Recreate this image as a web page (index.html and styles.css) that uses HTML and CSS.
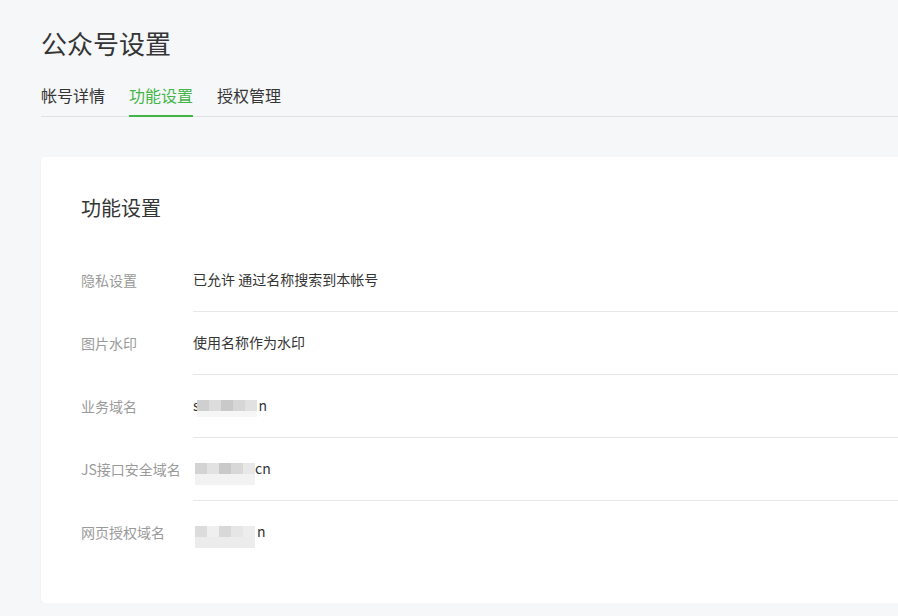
FILE: index.html
```html
<!DOCTYPE html>
<html lang="zh">
<head>
<meta charset="utf-8">
<title>公众号设置</title>
<link rel="stylesheet" href="styles.css">
</head>
<body>
<div class="page">
  <h1 class="page-title">公众号设置</h1>
  <nav class="tabs">
    <a class="tab">帐号详情</a>
    <a class="tab active">功能设置</a>
    <a class="tab">授权管理</a>
  </nav>
  <section class="card">
    <h2 class="card-title">功能设置</h2>
    <div class="rows">
      <div class="row">
        <div class="label">隐私设置</div>
        <div class="value">已允许 通过名称搜索到本帐号</div>
      </div>
      <div class="row">
        <div class="label">图片水印</div>
        <div class="value">使用名称作为水印</div>
      </div>
      <div class="row">
        <div class="label">业务域名</div>
        <div class="value">s<span class="mosaic m1"><i></i><i></i><i></i><i></i><i></i><i></i><i></i><i></i><i></i><i></i></span>n</div>
      </div>
      <div class="row">
        <div class="label">JS接口安全域名</div>
        <div class="value"><span class="mosaic m2"><i></i><i></i><i></i><i></i><i></i><i></i><i></i><i></i><i></i><i></i></span>cn</div>
      </div>
      <div class="row last">
        <div class="label">网页授权域名</div>
        <div class="value"><span class="mosaic m3"><i></i><i></i><i></i><i></i><i></i><i></i><i></i><i></i><i></i><i></i></span>n</div>
      </div>
    </div>
  </section>
</div>
</body>
</html>
```

FILE: styles.css
```css
html, body {
  margin: 0;
  padding: 0;
  background: #f6f7f9;
  overflow: hidden;
}
body {
  font-family: "Microsoft YaHei", "Noto Sans CJK SC", "Liberation Sans", sans-serif;
  color: #353535;
}
.page {
  padding: 24px 0 0 41px;
}
.page-title {
  margin: 0;
  font-size: 26px;
  font-weight: 400;
  line-height: 38px;
  color: #353535;
}
.tabs {
  display: flex;
  gap: 24px;
  margin-top: 22px;
  border-bottom: 1px solid #e0e1e3;
}
.tab {
  font-size: 16px;
  line-height: 22px;
  padding-bottom: 9px;
  color: #353535;
  border-bottom: 2px solid transparent;
  margin-bottom: -1px;
}
.tab.active {
  color: #44b549;
  border-bottom-color: #44b549;
}
.card {
  margin-top: 40px;
  background: #fff;
  border-radius: 4px 0 0 4px;
  box-shadow: 0 1px 3px rgba(0, 0, 0, 0.05);
  padding: 37px 0 39px 40px;
}
.card-title {
  margin: 0;
  font-size: 20px;
  font-weight: 400;
  line-height: 28px;
  color: #353535;
}
.rows {
  margin-top: 27px;
}
.row {
  display: flex;
  align-items: stretch;
}
.label {
  width: 112px;
  flex: none;
  font-size: 14px;
  color: #9a9a9a;
  display: flex;
  align-items: center;
  white-space: nowrap;
  padding-bottom: 2px;
}
.value {
  flex: 1;
  font-size: 14px;
  line-height: 20px;
  padding: 20px 0 22px;
  border-bottom: 1px solid #e7e7eb;
  display: flex;
  align-items: center;
  color: #353535;
}
.row.last .value {
  border-bottom: none;
  padding-bottom: 23px;
}
.mosaic {
  display: inline-grid;
  grid-template-columns: repeat(5, 12px);
  grid-template-rows: 11px 11px;
  margin: 0 2px 0 2px;
  filter: blur(0.4px);
}
.mosaic i {
  display: block;
  background: #e6e6e6;
}
.m1 i:nth-child(1) { background: #cfcfcf; }
.m1 i:nth-child(2) { background: #dcdcdc; }
.m1 i:nth-child(3) { background: #c9c9c9; }
.m1 i:nth-child(4) { background: #d6d6d6; }
.m1 i:nth-child(5) { background: #e1e1e1; }
.m1 i:nth-child(n+6) { background: #f6f6f6; }
.m1 { grid-template-rows: 11px 6px; margin-bottom: -6px; margin-left: -3px; }

.m2 i:nth-child(1) { background: #d3d3d3; }
.m2 i:nth-child(2) { background: #e2e2e2; }
.m2 i:nth-child(3) { background: #c9c9c9; }
.m2 i:nth-child(4) { background: #d8d8d8; }
.m2 i:nth-child(5) { background: #e8e8e8; }
.m2 i:nth-child(n+6) { background: #f2f2f2; }
.m2 { margin-bottom: -11px; margin-left: 2px; margin-right: 0; }

.m3 i:nth-child(1) { background: #dcdcdc; }
.m3 i:nth-child(2) { background: #efefef; }
.m3 i:nth-child(3) { background: #d8d8d8; }
.m3 i:nth-child(4) { background: #e6e6e6; }
.m3 i:nth-child(5) { background: #ededed; }
.m3 i:nth-child(n+6) { background: #ececec; }
.m3 { margin-bottom: -11px; margin-left: 2px; }
```
